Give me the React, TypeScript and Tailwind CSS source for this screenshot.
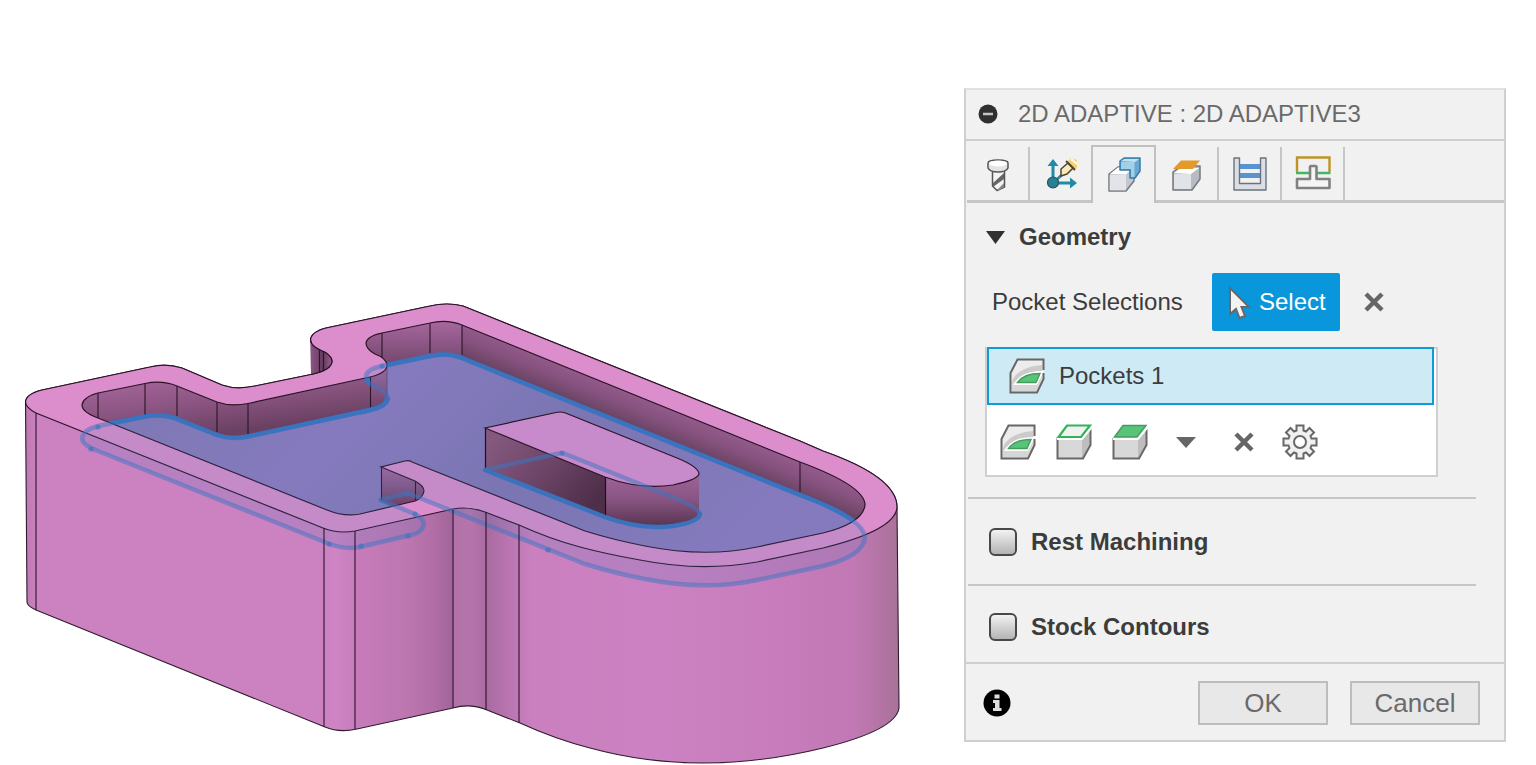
import { useState, type ReactNode } from "react";

const OUTER =
  "M36 413 Q26 408 25.500 402 Q26 394 42 390 L150 367 Q166 363 182 368 L222 385 Q236 390 255 386 L311 374.500 Q332 370 332 361 Q331 354 320 350 Q311 346 310.500 340 Q311 332 326 328 L430 306 Q447 302 463 306 L800 441 L823 451 Q897 477 897 507 Q896 530 823 548 L757 562 Q700 572 640 560 Q606 554 580 547 Q550 539 519 525 L485 512 Q468 506 453 509 L355 531 Q338 534 323 528 Z";

const SILHOUETTE =
  "M25.500 402 Q26 394 42 390 L150 367 Q166 363 182 368 L222 385 Q236 390 255 386 L311 374.500 Q332 370 332 361 Q331 354 320 350 Q311 346 310.500 340 Q311 332 326 328 L430 306 Q447 302 463 306 L800 441 L823 451 Q897 477 897 507 L899 708 Q896 730 823 748 Q700 778 590 748 Q555 739 520 723 L487 710 Q470 703 453 708 L357 729 Q339 733 325 727 L36 610 Q27 606 27 602 Z";

const POCKET =
  "M98 418 Q82 412 82 405 Q83 397 98 393 L145 383.500 Q162 380 177 386 L217 402 Q231 407 248 403.500 L370 377 Q387 373 387 365 Q386 358 375 354 Q366 349 366 343 Q367 336 382 333 L430 323 Q447 319 462 325 L800 462 Q865 486 865 505 Q863 523 823 533 L757 547 Q705 558 645 546 Q614 540 585 531 L412 462 Q409 460 405 461 L381 467 L415 481 Q424 486 424 491 Q423 498 415 501 L360 514 Q344 517 327 510 Z";

const ISLAND =
  "M485 428 L556 412.500 Q562 411 568 414 L677 458 Q699 467 699 474 Q697 480 673 485 Q640 490 605 477 Z";

const ISLAND_SIDE = "M485 428 L605 477 V516 L485 470 Z";

const ISLAND_END = "M605 477 Q640 490 673 485 Q699 480 699 473 V514 Q697 522 673 526 Q640 530 605 516 Z";

const POCKET_EDGES: [number, number, number][] = [
  [98, 393, 418],
  [145, 384, 415],
  [177, 386, 416],
  [217, 402, 432],
  [248, 404, 434],
  [382, 333, 358],
  [430, 323, 353],
  [462, 325, 355],
  [800, 462, 492],
];

const OUTER_EDGES: [number, number, number][] = [
  [36, 413, 610],
  [324, 528, 727],
  [355, 531, 729],
  [453, 510, 708],
  [486, 512, 710],
  [519, 525, 723],
];

const SNAP_POINTS = [
  [98, 427],
  [91, 449],
  [382, 366],
  [329, 544],
  [361, 546],
  [408, 536],
  [415, 514],
  [548, 550],
  [407, 494],
  [562, 453],
];

function Edges({ lines }: { lines: [number, number, number][] }) {
  return (
    <>
      {lines.map(([x, top, bottom]) => (
        <path key={x} d={`M${x} ${top}V${bottom}`} stroke="#2a1428" strokeWidth="1.100" />
      ))}
    </>
  );
}

function PartView() {
  return (
    <svg viewBox="0 0 964 765" className="block h-auto w-full" role="img" aria-label="Part with selected pocket">
      <defs>
        <linearGradient id="side" gradientUnits="userSpaceOnUse" x1="25" y1="0" x2="899" y2="0">
          <stop offset="0" stopColor="#bd78b2" />
          <stop offset="0.014" stopColor="#cc82c1" />
          <stop offset="0.34" stopColor="#cc82c1" />
          <stop offset="0.355" stopColor="#cf84c5" />
          <stop offset="0.38" stopColor="#c67cba" />
          <stop offset="0.43" stopColor="#be77b2" />
          <stop offset="0.465" stopColor="#b26fa7" />
          <stop offset="0.488" stopColor="#a2659a" />
          <stop offset="0.49" stopColor="#b172a8" />
          <stop offset="0.51" stopColor="#b575ac" />
          <stop offset="0.528" stopColor="#a96ba1" />
          <stop offset="0.565" stopColor="#c179b6" />
          <stop offset="0.58" stopColor="#ca80bf" />
          <stop offset="0.72" stopColor="#cc82c2" />
          <stop offset="0.88" stopColor="#c77bba" />
          <stop offset="0.95" stopColor="#c178b4" />
          <stop offset="1" stopColor="#a97299" />
        </linearGradient>
        <linearGradient id="wallLeft" gradientUnits="userSpaceOnUse" x1="230" y1="366" x2="238" y2="430">
          <stop offset="0" stopColor="#a5659a" />
          <stop offset="0.5" stopColor="#8b5582" />
          <stop offset="1" stopColor="#6b4163" />
        </linearGradient>
        <linearGradient id="wallRight" gradientUnits="userSpaceOnUse" x1="600" y1="378" x2="586" y2="412">
          <stop offset="0" stopColor="#955c8d" />
          <stop offset="0.45" stopColor="#85517d" />
          <stop offset="1" stopColor="#61405c" />
        </linearGradient>
        <linearGradient id="wallBack" x1="0" y1="0" x2="0" y2="1">
          <stop offset="0" stopColor="#a9689f" />
          <stop offset="1" stopColor="#6c4367" />
        </linearGradient>
        <linearGradient id="islandSide" gradientUnits="userSpaceOnUse" x1="500" y1="430" x2="590" y2="506">
          <stop offset="0" stopColor="#85597f" />
          <stop offset="0.5" stopColor="#6d4568" />
          <stop offset="1" stopColor="#4e2f49" />
        </linearGradient>
        <linearGradient id="islandEnd" x1="0" y1="0" x2="0" y2="1">
          <stop offset="0" stopColor="#a0659b" />
          <stop offset="0.5" stopColor="#885482" />
          <stop offset="1" stopColor="#57344f" />
        </linearGradient>
        <linearGradient id="floor" x1="0" y1="0" x2="1" y2="0.300">
          <stop offset="0" stopColor="#8676b1" />
          <stop offset="0.4" stopColor="#917bbe" />
          <stop offset="0.65" stopColor="#8575b2" />
          <stop offset="1" stopColor="#917bbe" />
        </linearGradient>
        <linearGradient id="notch" x1="0" y1="0" x2="1" y2="0">
          <stop offset="0" stopColor="#8d5684" />
          <stop offset="0.6" stopColor="#633c5d" />
          <stop offset="1" stopColor="#9b6092" />
        </linearGradient>
        <clipPath id="pocketClip">
          <path d={POCKET} />
        </clipPath>
      </defs>

      <path d={SILHOUETTE} fill="url(#side)" stroke="#2f1b2d" strokeWidth="1.100" />
      <path d="M310.500 340 Q311 346 320 350 Q331 354 332 361 Q332 370 311 374.500 Z" fill="url(#notch)" />
      <path d={OUTER} fill="#dc8dcb" stroke="#2a1428" strokeWidth="1.200" />
      <path d="M310.500 340 Q311 346 320 350 Q331 354 332 361 Q332 370 311 374.500 Z" fill="url(#notch)" />
      <path d="M310.500 340 Q311 346 320 350 Q331 354 332 361 Q332 370 311 374.500" stroke="#2a1428" strokeWidth="1.200" fill="none" />
      <path d="M319.500 350V372 M323.500 352V371" stroke="#2a1428" strokeWidth="1.100" />

      <g clipPath="url(#pocketClip)" fill="none">
        <path d="M70 350H387V480H70Z" fill="url(#wallLeft)" />
        <path d="M462 300H880V540H462Z" fill="url(#wallRight)" />
        <path d="M360 320H462V370H360Z" fill="url(#wallBack)" />
        <path
          d={POCKET}
          transform="translate(0 33)"
          fill="url(#floor)"
          stroke="#3a72bd"
          strokeWidth="4.500"
          strokeLinejoin="round"
        />
        <path d="M369 377 Q387 373 387 365 V398 Q386 406 370 410 Z" fill="url(#wallBack)" />
        <path d="M381 467 L415 481 Q424 486 424 491 Q423 498 415 501 L392 506 L381 500 Z" fill="url(#wallBack)" />
        <Edges lines={POCKET_EDGES} />
        <path d="M370.500 377V409 M415.500 481V500 M381.500 467V500" stroke="#2a1428" strokeWidth="1.100" />
        <path d="M387 366V396" stroke="#6c4a78" strokeWidth="1" />
        <path d="M360 412.500 L370 410 Q388 406 388 397" stroke="#3a72bd" strokeWidth="4.500" />
      </g>
      <path d={POCKET} fill="none" stroke="#2a1428" strokeWidth="1.200" />

      <path
        d={POCKET}
        transform="translate(0 33)"
        fill="#4478bd"
        fillOpacity="0.150"
        stroke="#3a76c4"
        strokeOpacity="0.500"
        strokeWidth="4.500"
        strokeLinejoin="round"
      />

      <path d={ISLAND_SIDE} fill="url(#islandSide)" />
      <path d={ISLAND_END} fill="url(#islandEnd)" />
      <path d={ISLAND} fill="#c78acb" stroke="#2a1428" strokeWidth="1.200" />
      <path d="M485.500 428V470 M605.500 477V516" stroke="#1f0f1d" strokeWidth="1.200" />
      <path
        d="M485 470 L556 454 Q562 452 568 455 L677 499 Q699 508 700 514"
        fill="none"
        stroke="#3a76c4"
        strokeOpacity="0.500"
        strokeWidth="4.500"
      />
      <path
        d="M485 470 L605 517 Q640 530 673 526 Q699 522 700 514"
        fill="none"
        stroke="#3a72bd"
        strokeWidth="4.500"
        strokeLinecap="round"
      />
      {SNAP_POINTS.map(([x, y]) => (
        <circle key={`${x}-${y}`} cx={x} cy={y} r="2.600" fill="#3a72bd" fillOpacity="0.600" />
      ))}
      <Edges lines={OUTER_EDGES} />
    </svg>
  );
}

function Icon({ children, size = 36 }: { children: ReactNode; size?: number }) {
  return (
    <svg width={size} height={size} viewBox={`0 0 ${size} ${size}`} fill="none" className="shrink-0" aria-hidden="true">
      {children}
    </svg>
  );
}

function ToolIcon() {
  return (
    <Icon>
      <path d="M12.500 13V30L17 34.500L24.500 31V13Z" fill="#f4f4f4" stroke="#555" strokeWidth="1.500" strokeLinejoin="round" />
      <path d="M13 27L24 17V23L13 31Z" fill="#666" />
      <path d="M17 34L24 27V31L19 34.500Z" fill="#888" />
      <path d="M8 7Q8 4 18 4Q28 4 28 7V12Q26 16 18 16Q10 16 8 12Z" fill="#e4e4e4" stroke="#555" strokeWidth="1.500" />
      <ellipse cx="18" cy="7.500" rx="9" ry="3" fill="#fff" />
    </Icon>
  );
}

function AxesIcon() {
  return (
    <Icon>
      <path d="M9 26V9 M9 27H28 M10 26L20 17" stroke="#218ba5" strokeWidth="3" />
      <path d="M9 3L14.500 10H3.500Z M33 27L26 32.500V21.500Z" fill="#218ba5" />
      <circle cx="9" cy="26.500" r="5.500" fill="#2b7f93" stroke="#235562" strokeWidth="1.200" />
      <path d="M23 6L27 2L33 4V12L29 15Z" fill="#f2cf70" />
      <path d="M27 3L33 8" stroke="#fff7df" strokeWidth="2.500" />
      <path d="M17 13L24 7L29 12L23 18L17 20Z" fill="#fbeab6" stroke="#4d4534" strokeWidth="1.500" />
      <path d="M22 5L31 14" stroke="#4d4534" strokeWidth="1.800" />
    </Icon>
  );
}

function GeometryIcon() {
  return (
    <Icon>
      <path d="M3 17L12 10H28V24L20 34H3Z" fill="#c3c7cd" stroke="#747980" strokeWidth="1.500" strokeLinejoin="round" />
      <path d="M3.700 18H20V33.300H3.700Z" fill="#e2e4e8" />
      <path d="M4 17L12 10.500H27L20 17.500Z" fill="#fff" />
      <path d="M14 4L18 1H34V14L29 21H24V13H14Z" fill="#6aa9cf" stroke="#397eaa" strokeWidth="1.500" strokeLinejoin="round" />
      <path d="M15 5H28.500V20H25V12H15Z" fill="#a2d0e7" />
      <path d="M15 4L18.500 2H33L29 5Z" fill="#c0e2f1" />
    </Icon>
  );
}

function HeightsIcon() {
  return (
    <Icon>
      <path d="M4 16L12 10H31V23L23 34H4Z" fill="#b7bbc2" stroke="#747980" strokeWidth="1.500" strokeLinejoin="round" />
      <path d="M5 18H22V33H5Z" fill="#e0e3e8" />
      <path d="M5 17L12 12H30L22 18Z" fill="#fff" />
      <path d="M4 13L12 4.500H31L24 13Z" fill="#e29a2b" />
    </Icon>
  );
}

function PassesIcon() {
  return (
    <Icon>
      <path d="M7 8H29V13H7Z M7 17H29V22H7Z" fill="#5593d1" />
      <path d="M2 2H7.500V27.500H28.500V2H34V34H2Z" fill="#dadfe5" stroke="#6c737d" strokeWidth="1.400" strokeLinejoin="round" />
    </Icon>
  );
}

function LinkingIcon() {
  return (
    <Icon>
      <path d="M2 16V1.500H34.500V16" stroke="#bd9428" strokeWidth="2.400" />
      <path d="M1 17H14 M22 17H35.500" stroke="#42b660" strokeWidth="2.600" />
      <path d="M15 11Q15 10 16 10H20Q21.500 10 21.500 11V23H34.500V32H2V23H15Z" fill="#f4f4f4" stroke="#818181" strokeWidth="2.600" strokeLinejoin="round" />
    </Icon>
  );
}

function PocketIcon() {
  return (
    <Icon>
      <path d="M1.500 15L8.500 1.500H34.500V21L28 34.500H1.500Z" fill="#ececec" />
      <path d="M3 24C6 13 20 8 33 7V14C20 14 9 18 3 27Z" fill="#cbcbcb" />
      <path d="M3 27H28L33 15V21L27 33.500H3Z" fill="#d6d6d6" />
      <path d="M5 27C10 16 20 13 35 13L28 27Z" fill="#fff" />
      <path d="M8.500 24.500C13 18 21 15.500 31 15.500L27 24.500Z" fill="#58c47b" stroke="#449d5b" strokeWidth="1.400" />
      <path d="M34.500 12V1.500H8.500L1.500 15V34.500H28L34.500 21V15" stroke="#666" strokeWidth="2" />
    </Icon>
  );
}

function BoxIcon({ filled = false }: { filled?: boolean }) {
  return (
    <Icon>
      <path d="M1.500 15H25L34.500 4V21L27 34.500H1.500Z" fill="#d8d8d8" />
      <path d="M26 15L34.500 4V21L27 34H26Z" fill="#bdbdbd" />
      <path d="M1.500 14V34.500H27L34.500 21V4" stroke="#686868" strokeWidth="2" />
      <path d="M1 15H26L36 3" stroke="#fff" strokeWidth="2" />
      <path
        d="M2.500 13L11 1.500H34L25 13Z"
        fill={filled ? "#58c47b" : "#f1f1f1"}
        stroke={filled ? "#469b5e" : "#2fb457"}
        strokeWidth={filled ? 1.5 : 2.2}
      />
    </Icon>
  );
}

function GearIcon() {
  return (
    <Icon>
      <g fill="#f1f1f1" stroke="#686868" strokeWidth="2">
        <path d="M14.500 1.500H21.500V6.500L24 7.500L27.500 4L32 8.500L28.500 12L29.500 14.500H34.500V21.500H29.500L28.500 24L32 27.500L27.500 32L24 28.500L21.500 29.500V34.500H14.500V29.500L12 28.500L8.500 32L4 27.500L7.500 24L6.500 21.500H1.500V14.500H6.500L7.500 12L4 8.500L8.500 4L12 7.500L14.500 6.500Z" />
        <circle cx="18" cy="18" r="6" fill="#fff" />
      </g>
    </Icon>
  );
}

function CrossIcon() {
  return (
    <Icon size={20}>
      <path d="M2 2L18 18M18 2L2 18" stroke="#666" strokeWidth="4.500" />
    </Icon>
  );
}

const tabs = [
  { name: "Tool", icon: <ToolIcon /> },
  { name: "Setup", icon: <AxesIcon /> },
  { name: "Geometry", icon: <GeometryIcon /> },
  { name: "Heights", icon: <HeightsIcon /> },
  { name: "Passes", icon: <PassesIcon /> },
  { name: "Linking", icon: <LinkingIcon /> },
];

function TabBar() {
  const [active, setActive] = useState(2);

  return (
    <div className="flex h-[62px] border-x-2 border-[#cfcfcf] pt-1 pl-px" role="tablist">
      {tabs.map((tab, i) => (
        <button
          key={tab.name}
          type="button"
          role="tab"
          aria-label={tab.name}
          aria-selected={i === active}
          onClick={() => setActive(i)}
          className={
            i === active
              ? "-ml-0.5 flex w-[65px] items-center justify-center border-x-2 border-t-2 border-[#c0c0c0]"
              : "flex w-[63px] flex-col border-b-3 border-[#c6c6c6]"
          }
        >
          {i === active ? (
            tab.icon
          ) : (
            <span
              className={
                i === active - 1
                  ? "mt-0.5 flex w-full flex-1 items-center justify-center"
                  : "mt-0.5 flex w-full flex-1 items-center justify-center border-r-2 border-[#c6c6c6]"
              }
            >
              {tab.icon}
            </span>
          )}
        </button>
      ))}
      <div className="flex-1 border-b-3 border-[#c6c6c6]" />
    </div>
  );
}

function CheckRow({ id, label }: { id: string; label: string }) {
  return (
    <div className="flex items-center gap-[14px] pl-[21px]">
      <input
        id={id}
        type="checkbox"
        className="size-7 appearance-none rounded-md border-2 border-[#484848] bg-linear-to-b from-[#f2f2f2] to-[#b4b4b4] checked:to-[#0696d7]"
      />
      <label htmlFor={id} className="font-bold">
        {label}
      </label>
    </div>
  );
}

function AdaptivePanel() {
  return (
    <aside className="w-[542px] shrink-0 bg-[#f1f1f1] text-2xl text-[#3c3c3c]">
      <header className="flex h-[53px] items-center gap-5 border-2 border-[#cfcfcf] border-t-[#e0e0e0] pb-0.5 pl-3 text-[#6a6a6a]">
        <button type="button" aria-label="Collapse panel">
          <Icon size={20}>
            <circle cx="10" cy="10" r="9.500" fill="#303030" />
            <path d="M5 10H15" stroke="#c5c5c5" strokeWidth="2.500" />
          </Icon>
        </button>
        <h1>2D ADAPTIVE : 2D ADAPTIVE3</h1>
      </header>

      <TabBar />

      <div className="border-x-2 border-[#cfcfcf] pt-4 pl-px">
        <h2 className="flex h-9 items-center gap-[14px] pl-[19px] font-bold">
          <svg width="19" height="13" viewBox="0 0 19 13" aria-hidden="true">
            <path d="M0 0H19L9.500 13Z" fill="#303030" />
          </svg>
          Geometry
        </h2>

        <div className="mt-[18px] flex h-[58px] items-center pl-[25px]">
          <span className="w-[220px]">Pocket Selections</span>
          <button type="button" className="flex h-full w-32 items-center gap-[7px] rounded-xs bg-[#0996db] pl-4 text-white">
            <svg width="24" height="36" viewBox="0 0 24 36" fill="none" aria-hidden="true">
              <path d="M2 4L21 23H13.500L17 32L11.500 34L8 25L2 30Z" fill="#f2f2f2" stroke="#686868" strokeWidth="2" />
            </svg>
            Select
          </button>
          <button type="button" aria-label="Clear selection" className="ml-6">
            <CrossIcon />
          </button>
        </div>

        <div className="mt-4 mr-[66px] ml-[18px] border-2 border-[#cfcfcf] bg-white">
          <button
            type="button"
            className="-mt-0.5 flex h-[58px] w-[calc(100%-2px)] items-center gap-[14px] border-2 border-[#0f9ad9] bg-[#cdeaf5] pl-5"
          >
            <PocketIcon />
            Pockets 1
          </button>
          <div className="flex h-[70px] items-center gap-5 pt-1 pl-[13px]">
            <button type="button" aria-label="Pocket recognition">
              <PocketIcon />
            </button>
            <button type="button" aria-label="Contour selection">
              <BoxIcon />
            </button>
            <button type="button" aria-label="Face selection">
              <BoxIcon filled />
            </button>
            <button type="button" aria-label="More selection types" className="ml-2">
              <svg width="20" height="11" viewBox="0 0 20 11" aria-hidden="true">
                <path d="M0 0H20L10 11Z" fill="#666" />
              </svg>
            </button>
            <button type="button" aria-label="Remove" className="ml-[18px]">
              <CrossIcon />
            </button>
            <button type="button" aria-label="Settings" className="ml-2">
              <GearIcon />
            </button>
          </div>
        </div>

        <div className="mt-5 mr-7 ml-px flex h-[89px] items-center border-y-2 border-[#c6c6c6]">
          <CheckRow id="rest-machining" label="Rest Machining" />
        </div>
        <div className="ml-px flex h-[76px] items-center pt-1.5">
          <CheckRow id="stock-contours" label="Stock Contours" />
        </div>
      </div>

      <footer className="flex h-20 items-center gap-[22px] border-2 border-[#cfcfcf] pt-0.5 pr-6 pl-[17px] text-[26px] text-[#6a6a6a]">
        <button type="button" aria-label="Information" className="mr-auto">
          <Icon size={28}>
            <circle cx="14" cy="14" r="13.500" fill="#000" />
            <path d="M11.500 5.500H16.500V9.500H11.500Z M10 11H16.500V19H18.500V22H10V19H12V14H10Z" fill="#dedede" />
          </Icon>
        </button>
        <button type="button" className="h-11 w-[130px] border-2 border-[#bdbdbd] bg-[#e8e8e8]">
          OK
        </button>
        <button type="button" className="h-11 w-[130px] border-2 border-[#bdbdbd] bg-[#e8e8e8]">
          Cancel
        </button>
      </footer>
    </aside>
  );
}

export default function App() {
  return (
    <main className="flex min-h-screen items-start bg-white pr-[30px] font-['Liberation_Sans',Arial,sans-serif]">
      <section className="min-w-0 flex-1">
        <PartView />
      </section>
      <div className="pt-[88px]">
        <AdaptivePanel />
      </div>
    </main>
  );
}
